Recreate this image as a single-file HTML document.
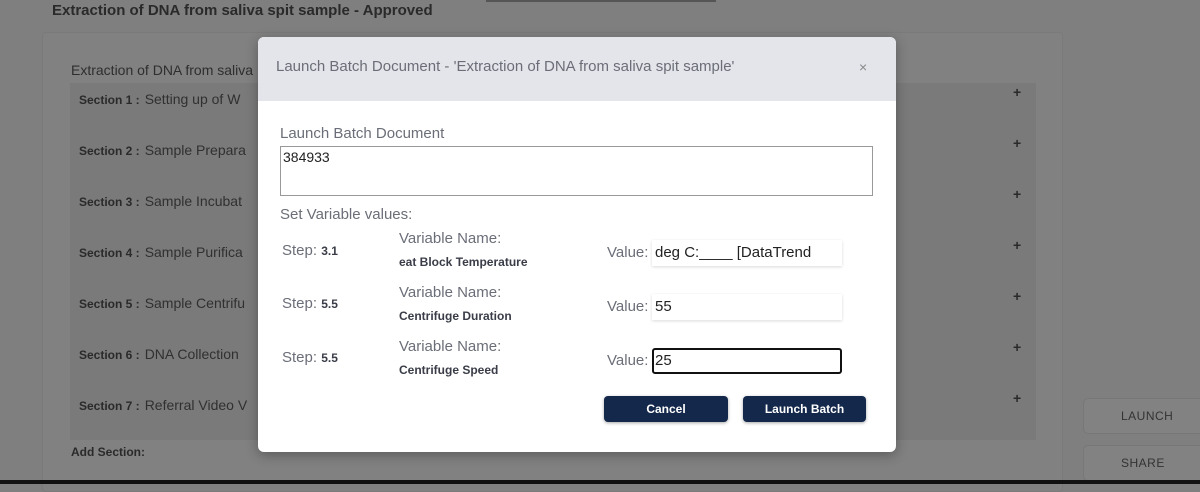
<!DOCTYPE html>
<html><head><style>
*{margin:0;padding:0;box-sizing:border-box}
body{width:1200px;height:484px;overflow:hidden;background:#7f7f7f;font-family:"Liberation Sans",sans-serif;position:relative}
.abs{position:absolute}
.title{left:52px;top:2px;font-size:15px;font-weight:bold;color:#2a2a2a}
.card{left:42px;top:32px;width:1021px;height:460px;background:#818181;border:1px solid #7a7a7a;border-radius:4px}
.sec{left:70px;top:83px;width:966px;height:357px;background:#7a7a7a}
.sh{left:71px;top:62px;font-size:14px;color:#2e2e2e}
.row{left:79px;font-size:12px;font-weight:bold;color:#2a2a2a}
.row span{font-weight:normal;font-size:14px;color:#303030;margin-left:5px}
.plus{left:1013px;font-size:14px;color:#2a2a2a;font-weight:bold}
.btn{left:1083px;width:130px;height:36px;border:1px solid #777;border-radius:5px;background:#828282;color:#333;font-size:12px;letter-spacing:.5px;text-align:left;padding-left:37px;line-height:34px}
.modal{left:258px;top:37px;width:638px;height:415px;background:#fff;border-radius:6px;overflow:hidden;box-shadow:0 3px 12px rgba(0,0,0,.3)}
.mh{left:0;top:0;width:638px;height:64px;background:#e4e5ea}
.g{color:#6b6e78;font-size:15px}
.b{color:#3a3d48;font-weight:bold;font-size:12px}
.inp{background:#fff;box-shadow:0 1px 3px rgba(0,0,0,.15);font-size:15px;color:#222;padding-left:3px;line-height:26px;height:26px}
.nb{background:#13284a;color:#fff;font-size:12px;font-weight:bold;text-align:center;line-height:26px;height:26px;border-radius:4px;box-shadow:0 1px 3px rgba(0,0,0,.35)}
</style></head><body>
<div class="abs" style="left:486px;top:0;width:230px;height:2px;background:#555"></div>
<div class="abs title">Extraction of DNA from saliva spit sample - Approved</div>
<div class="abs card"></div>
<div class="abs sec"></div>
<div class="abs sh">Extraction of DNA from saliva</div>
<div class="abs row" style="top:91px">Section 1 :<span>Setting up of W</span></div>
<div class="abs row" style="top:142px">Section 2 :<span>Sample Prepara</span></div>
<div class="abs row" style="top:193px">Section 3 :<span>Sample Incubat</span></div>
<div class="abs row" style="top:244px">Section 4 :<span>Sample Purifica</span></div>
<div class="abs row" style="top:295px">Section 5 :<span>Sample Centrifu</span></div>
<div class="abs row" style="top:346px">Section 6 :<span>DNA Collection</span></div>
<div class="abs row" style="top:397px">Section 7 :<span>Referral Video V</span></div>
<div class="abs plus" style="top:84px">+</div><div class="abs plus" style="top:135px">+</div><div class="abs plus" style="top:186px">+</div><div class="abs plus" style="top:237px">+</div><div class="abs plus" style="top:288px">+</div><div class="abs plus" style="top:339px">+</div><div class="abs plus" style="top:390px">+</div>
<div class="abs" style="left:71px;top:445px;font-size:12px;font-weight:bold;color:#2a2a2a">Add Section:</div>
<div class="abs btn" style="top:398px">LAUNCH</div>
<div class="abs btn" style="top:445px">SHARE</div>
<div class="abs" style="left:0;top:480px;width:1200px;height:4px;background:#111"></div>

<div class="abs modal">
<div class="abs mh"></div>
<div class="abs g" style="left:18px;top:21px">Launch Batch Document - 'Extraction of DNA from saliva spit sample'</div>
<div class="abs" style="left:601px;top:22px;font-size:14px;color:#888">×</div>
<div class="abs g" style="left:22px;top:88px">Launch Batch Document</div>
<div class="abs" style="left:22px;top:109px;width:593px;height:50px;border:1px solid #999;font-size:14px;color:#222;padding:2px 2px">384933</div>
<div class="abs g" style="left:22px;top:169px">Set Variable values:</div>

<div class="abs g" style="left:24px;top:205px">Step: <span class="b">3.1</span></div>
<div class="abs g" style="left:141px;top:193px">Variable Name:</div>
<div class="abs b" style="left:141px;top:218px">eat Block Temperature</div>
<div class="abs g" style="left:349px;top:207px">Value:</div>
<div class="abs inp" style="left:394px;top:203px;width:190px">deg C:____ [DataTrend</div>

<div class="abs g" style="left:24px;top:258px">Step: <span class="b">5.5</span></div>
<div class="abs g" style="left:141px;top:247px">Variable Name:</div>
<div class="abs b" style="left:141px;top:272px">Centrifuge Duration</div>
<div class="abs g" style="left:349px;top:261px">Value:</div>
<div class="abs inp" style="left:394px;top:257px;width:190px">55</div>

<div class="abs g" style="left:24px;top:312px">Step: <span class="b">5.5</span></div>
<div class="abs g" style="left:141px;top:301px">Variable Name:</div>
<div class="abs b" style="left:141px;top:326px">Centrifuge Speed</div>
<div class="abs g" style="left:349px;top:315px">Value:</div>
<div class="abs" style="left:394px;top:311px;width:190px;height:26px;border:2px solid #111;border-radius:3px;font-size:15px;line-height:22px;padding-left:1px;color:#222">25</div>

<div class="abs nb" style="left:346px;top:359px;width:124px">Cancel</div>
<div class="abs nb" style="left:485px;top:359px;width:123px">Launch Batch</div>
</div>
</body></html>
